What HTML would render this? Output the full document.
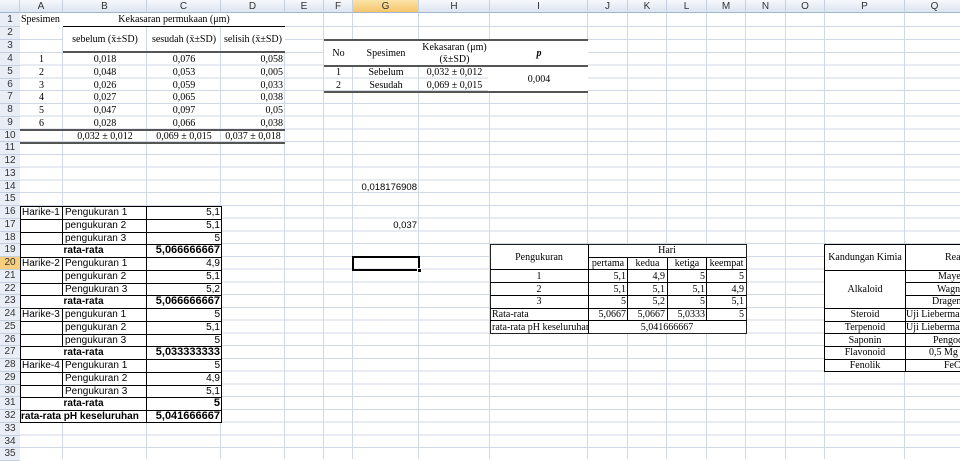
<!DOCTYPE html>
<html><head><meta charset="utf-8"><style>
*{margin:0;padding:0;box-sizing:border-box}
body{width:960px;height:459px;overflow:hidden;background:#fff;position:relative;font-family:"Liberation Serif",serif;font-size:10px;color:#000}
div{position:absolute}
.c{white-space:nowrap;overflow:hidden;height:12.75px;line-height:13px}
.s{font-family:"Liberation Sans",sans-serif;font-size:10px}
.b{font-weight:bold}
.r{text-align:right;padding-right:2px}
.m{text-align:center}
.vl{top:13px;width:1px;height:446px;background:#d0d7e5}
.rh{left:0;width:20px;text-align:center;font-family:"Liberation Sans",sans-serif;font-size:10px;color:#333;background:#e9eef6;border-bottom:1px solid #c5cfdf;line-height:12px}
.ch{top:0;height:13px;text-align:center;font-family:"Liberation Sans",sans-serif;font-size:10px;color:#333;background:linear-gradient(#f6f8fb,#dde5f0);border-right:1px solid #c5cfdf;border-bottom:1px solid #9eb6ce;line-height:13px}
.h{height:1px;background:#000}
.H{height:2px;background:#555}
.v{width:1px;background:#000}
</style></head><body>
<div style="left:20px;top:53px;width:940px;height:406px;background:repeating-linear-gradient(to bottom,transparent 0,transparent 11.75px,#d0d7e5 11.75px,#d0d7e5 12.75px)"></div>
<div style="left:20px;top:26px;width:940px;height:1px;background:#d0d7e5"></div>
<div style="left:20px;top:39px;width:940px;height:1px;background:#d0d7e5"></div>
<div style="left:20px;top:52px;width:940px;height:1px;background:#d0d7e5"></div>
<div class="vl" style="left:62px"></div><div class="vl" style="left:146px"></div><div class="vl" style="left:220px"></div><div class="vl" style="left:284px"></div><div class="vl" style="left:323px"></div><div class="vl" style="left:352px"></div><div class="vl" style="left:418px"></div><div class="vl" style="left:489px"></div><div class="vl" style="left:587px"></div><div class="vl" style="left:627px"></div><div class="vl" style="left:666px"></div><div class="vl" style="left:706px"></div><div class="vl" style="left:745px"></div><div class="vl" style="left:785px"></div><div class="vl" style="left:824px"></div><div class="vl" style="left:904px"></div>
<div class="ch" style="left:0;width:20px"></div>
<div class="ch" style="left:20px;width:43px">A</div><div class="ch" style="left:63px;width:84px">B</div><div class="ch" style="left:147px;width:74px">C</div><div class="ch" style="left:221px;width:64px">D</div><div class="ch" style="left:285px;width:39px">E</div><div class="ch" style="left:324px;width:29px">F</div><div class="ch" style="left:353px;width:66px;background:linear-gradient(#fbe3a8,#f5c56b)">G</div><div class="ch" style="left:419px;width:71px">H</div><div class="ch" style="left:490px;width:98px">I</div><div class="ch" style="left:588px;width:40px">J</div><div class="ch" style="left:628px;width:39px">K</div><div class="ch" style="left:667px;width:40px">L</div><div class="ch" style="left:707px;width:39px">M</div><div class="ch" style="left:746px;width:40px">N</div><div class="ch" style="left:786px;width:39px">O</div><div class="ch" style="left:825px;width:80px">P</div><div class="ch" style="left:905px;width:60px">Q</div>
<div class="rh" style="top:13px;height:14px;line-height:14px">1</div><div class="rh" style="top:27px;height:13px">2</div><div class="rh" style="top:40px;height:13px">3</div>
<div class="rh" style="top:53px;height:12.75px">4</div><div class="rh" style="top:65.75px;height:12.75px">5</div><div class="rh" style="top:78.5px;height:12.75px">6</div><div class="rh" style="top:91.25px;height:12.75px">7</div><div class="rh" style="top:104px;height:12.75px">8</div><div class="rh" style="top:116.75px;height:12.75px">9</div><div class="rh" style="top:129.5px;height:12.75px">10</div><div class="rh" style="top:142.25px;height:12.75px">11</div><div class="rh" style="top:155px;height:12.75px">12</div><div class="rh" style="top:167.75px;height:12.75px">13</div><div class="rh" style="top:180.5px;height:12.75px">14</div><div class="rh" style="top:193.25px;height:12.75px">15</div><div class="rh" style="top:206px;height:12.75px">16</div><div class="rh" style="top:218.75px;height:12.75px">17</div><div class="rh" style="top:231.5px;height:12.75px">18</div><div class="rh" style="top:244.25px;height:12.75px">19</div><div class="rh" style="top:257px;height:12.75px;background:#f7cf7c">20</div><div class="rh" style="top:269.75px;height:12.75px">21</div><div class="rh" style="top:282.5px;height:12.75px">22</div><div class="rh" style="top:295.25px;height:12.75px">23</div><div class="rh" style="top:308px;height:12.75px">24</div><div class="rh" style="top:320.75px;height:12.75px">25</div><div class="rh" style="top:333.5px;height:12.75px">26</div><div class="rh" style="top:346.25px;height:12.75px">27</div><div class="rh" style="top:359px;height:12.75px">28</div><div class="rh" style="top:371.75px;height:12.75px">29</div><div class="rh" style="top:384.5px;height:12.75px">30</div><div class="rh" style="top:397.25px;height:12.75px">31</div><div class="rh" style="top:410px;height:12.75px">32</div><div class="rh" style="top:422.75px;height:12.75px">33</div><div class="rh" style="top:435.5px;height:12.75px">34</div><div class="rh" style="top:448.25px;height:12.75px">35</div>

<div style="left:20px;top:13px;width:43px;height:14px;background:#fff"></div>
<div class="c" style="left:21px;top:13px;width:42px;height:14px;line-height:14px">Spesimen</div>
<div style="left:63px;top:13px;width:222px;height:14px;background:#fff"></div>
<div class="c m" style="left:63px;top:13px;width:222px;height:14px;line-height:14px">Kekasaran permukaan (μm)</div>
<div class="h" style="left:63px;top:26px;width:222px"></div>
<div style="left:63px;top:27px;width:222px;height:26px;background:#fff"></div>
<div class="c m" style="left:63px;top:33px;width:84px">sebelum (x̄±SD)</div>
<div class="c m" style="left:147px;top:33px;width:74px">sesudah (x̄±SD)</div>
<div class="c m" style="left:221px;top:33px;width:64px">selisih (x̄±SD)</div>
<div class="vl" style="left:146px;top:27px;height:26px"></div><div class="vl" style="left:220px;top:27px;height:26px"></div>
<div class="H" style="left:63px;top:51px;width:222px"></div>
<div class="c m" style="left:20px;top:53px;width:43px">1</div><div class="c m" style="left:63px;top:53px;width:84px">0,018</div><div class="c m" style="left:147px;top:53px;width:74px">0,076</div><div class="c r" style="left:221px;top:53px;width:64px">0,058</div>
<div class="c m" style="left:20px;top:65.75px;width:43px">2</div><div class="c m" style="left:63px;top:65.75px;width:84px">0,048</div><div class="c m" style="left:147px;top:65.75px;width:74px">0,053</div><div class="c r" style="left:221px;top:65.75px;width:64px">0,005</div>
<div class="c m" style="left:20px;top:78.5px;width:43px">3</div><div class="c m" style="left:63px;top:78.5px;width:84px">0,026</div><div class="c m" style="left:147px;top:78.5px;width:74px">0,059</div><div class="c r" style="left:221px;top:78.5px;width:64px">0,033</div>
<div class="c m" style="left:20px;top:91.25px;width:43px">4</div><div class="c m" style="left:63px;top:91.25px;width:84px">0,027</div><div class="c m" style="left:147px;top:91.25px;width:74px">0,065</div><div class="c r" style="left:221px;top:91.25px;width:64px">0,038</div>
<div class="c m" style="left:20px;top:104px;width:43px">5</div><div class="c m" style="left:63px;top:104px;width:84px">0,047</div><div class="c m" style="left:147px;top:104px;width:74px">0,097</div><div class="c r" style="left:221px;top:104px;width:64px">0,05</div>
<div class="c m" style="left:20px;top:116.75px;width:43px">6</div><div class="c m" style="left:63px;top:116.75px;width:84px">0,028</div><div class="c m" style="left:147px;top:116.75px;width:74px">0,066</div><div class="c r" style="left:221px;top:116.75px;width:64px">0,038</div>
<div class="H" style="left:20px;top:128.5px;width:265px"></div>
<div class="c m" style="left:63px;top:130px;width:84px">0,032 ± 0,012</div><div class="c m" style="left:147px;top:130px;width:74px">0,069 ± 0,015</div><div class="c m" style="left:221px;top:130px;width:64px">0,037 ± 0,018</div>
<div class="H" style="left:20px;top:141.5px;width:265px"></div>

<div class="H" style="left:324px;top:39px;width:264px"></div>
<div style="left:324px;top:41px;width:264px;height:24px;background:#fff"></div>
<div class="c m" style="left:324px;top:47px;width:29px">No</div>
<div class="c m" style="left:353px;top:47px;width:66px">Spesimen</div>
<div class="c m" style="left:419px;top:41px;width:71px">Kekasaran (μm)</div>
<div class="c m" style="left:419px;top:53px;width:71px">(x̄±SD)</div>
<div class="c m b" style="left:490px;top:47px;width:98px;font-style:italic">p</div>
<div class="H" style="left:324px;top:64.75px;width:264px"></div>
<div style="left:488px;top:66.75px;width:100px;height:24px;background:#fff"></div>
<div class="c m" style="left:324px;top:66px;width:29px">1</div><div class="c m" style="left:353px;top:66px;width:66px">Sebelum</div><div class="c m" style="left:419px;top:66px;width:71px">0,032 ± 0,012</div>
<div class="c m" style="left:324px;top:78.5px;width:29px">2</div><div class="c m" style="left:353px;top:78.5px;width:66px">Sesudah</div><div class="c m" style="left:419px;top:78.5px;width:71px">0,069 ± 0,015</div>
<div class="c m" style="left:490px;top:72.5px;width:98px">0,004</div>
<div class="H" style="left:324px;top:90.5px;width:264px"></div>

<div class="c r s" style="left:353px;top:180.5px;width:66px;font-size:9.5px">0,018176908</div>
<div class="c r s" style="left:353px;top:218.75px;width:66px;font-size:9.5px">0,037</div>
<div style="left:352px;top:255.5px;width:68px;height:15px;border:2px solid #000"></div>
<div style="left:417px;top:268px;width:5px;height:5px;background:#000;border:1px solid #fff"></div>

<div style="left:20px;top:206px;width:202px;height:216.75px;border:1px solid #000;background:#fff"></div>
<div class="h" style="left:20px;top:218.75px;width:202px"></div><div class="h" style="left:20px;top:231.5px;width:202px"></div><div class="h" style="left:20px;top:244.25px;width:202px"></div><div class="h" style="left:20px;top:257px;width:202px"></div><div class="h" style="left:20px;top:269.75px;width:202px"></div><div class="h" style="left:20px;top:282.5px;width:202px"></div><div class="h" style="left:20px;top:295.25px;width:202px"></div><div class="h" style="left:20px;top:308px;width:202px"></div><div class="h" style="left:20px;top:320.75px;width:202px"></div><div class="h" style="left:20px;top:333.5px;width:202px"></div><div class="h" style="left:20px;top:346.25px;width:202px"></div><div class="h" style="left:20px;top:359px;width:202px"></div><div class="h" style="left:20px;top:371.75px;width:202px"></div><div class="h" style="left:20px;top:384.5px;width:202px"></div><div class="h" style="left:20px;top:397.25px;width:202px"></div><div class="h" style="left:20px;top:410px;width:202px"></div>
<div class="v" style="left:146px;top:206px;height:216.75px"></div>
<div class="v" style="left:62px;top:206px;height:38.25px"></div><div class="v" style="left:62px;top:257px;height:38.25px"></div><div class="v" style="left:62px;top:308px;height:38.25px"></div><div class="v" style="left:62px;top:359px;height:38.25px"></div>
<div class="c s" style="left:22px;top:206px">Harike-1</div><div class="c s" style="left:65px;top:206px">Pengukuran 1</div><div class="c s r" style="left:147px;top:206px;width:75px">5,1</div>
<div class="c s" style="left:65px;top:218.75px">pengukuran 2</div><div class="c s r" style="left:147px;top:218.75px;width:75px">5,1</div>
<div class="c s" style="left:65px;top:231.5px">pengukuran 3</div><div class="c s r" style="left:147px;top:231.5px;width:75px">5</div>
<div class="c s b m" style="left:20px;top:244.25px;width:127px">rata-rata</div><div class="c s b r" style="left:147px;top:244.25px;width:75px;font-size:11px">5,066666667</div>
<div class="c s" style="left:22px;top:257px">Harike-2</div><div class="c s" style="left:65px;top:257px">Pengukuran 1</div><div class="c s r" style="left:147px;top:257px;width:75px">4,9</div>
<div class="c s" style="left:65px;top:269.75px">pengukuran 2</div><div class="c s r" style="left:147px;top:269.75px;width:75px">5,1</div>
<div class="c s" style="left:65px;top:282.5px">Pengukuran 3</div><div class="c s r" style="left:147px;top:282.5px;width:75px">5,2</div>
<div class="c s b m" style="left:20px;top:295.25px;width:127px">rata-rata</div><div class="c s b r" style="left:147px;top:295.25px;width:75px;font-size:11px">5,066666667</div>
<div class="c s" style="left:22px;top:308px">Harike-3</div><div class="c s" style="left:65px;top:308px">pengukuran 1</div><div class="c s r" style="left:147px;top:308px;width:75px">5</div>
<div class="c s" style="left:65px;top:320.75px">pengukuran 2</div><div class="c s r" style="left:147px;top:320.75px;width:75px">5,1</div>
<div class="c s" style="left:65px;top:333.5px">pengukuran 3</div><div class="c s r" style="left:147px;top:333.5px;width:75px">5</div>
<div class="c s b m" style="left:20px;top:346.25px;width:127px">rata-rata</div><div class="c s b r" style="left:147px;top:346.25px;width:75px;font-size:11px">5,033333333</div>
<div class="c s" style="left:22px;top:359px">Harike-4</div><div class="c s" style="left:65px;top:359px">Pengukuran 1</div><div class="c s r" style="left:147px;top:359px;width:75px">5</div>
<div class="c s" style="left:65px;top:371.75px">Pengukuran 2</div><div class="c s r" style="left:147px;top:371.75px;width:75px">4,9</div>
<div class="c s" style="left:65px;top:384.5px">Pengukuran 3</div><div class="c s r" style="left:147px;top:384.5px;width:75px">5,1</div>
<div class="c s b m" style="left:20px;top:397.25px;width:127px">rata-rata</div><div class="c s b r" style="left:147px;top:397.25px;width:75px;font-size:11px">5</div>
<div class="c s b" style="left:21px;top:410px;width:126px">rata-rata pH keseluruhan</div><div class="c s b r" style="left:147px;top:410px;width:75px;font-size:11px">5,041666667</div>

<div style="left:490px;top:243.5px;width:257px;height:90.5px;border:1.5px solid #222;background:#fff"></div>
<div class="h" style="left:588px;top:256.5px;width:158px"></div>
<div class="h" style="left:490px;top:269.25px;width:257px"></div><div class="h" style="left:490px;top:282px;width:257px"></div><div class="h" style="left:490px;top:294.75px;width:257px"></div><div class="h" style="left:490px;top:307.5px;width:257px"></div><div class="h" style="left:490px;top:320.25px;width:257px"></div>
<div class="v" style="left:587.5px;top:244px;height:90px"></div>
<div class="v" style="left:627px;top:257px;height:63.5px"></div><div class="v" style="left:666.5px;top:257px;height:63.5px"></div><div class="v" style="left:706px;top:257px;height:63.5px"></div>
<div class="c m" style="left:490px;top:250.5px;width:98px">Pengukuran</div>
<div class="c m" style="left:588px;top:244.25px;width:158px">Hari</div>
<div class="c m" style="left:588px;top:257px;width:40px">pertama</div><div class="c m" style="left:628px;top:257px;width:39px">kedua</div><div class="c m" style="left:667px;top:257px;width:40px">ketiga</div><div class="c m" style="left:707px;top:257px;width:39px">keempat</div>
<div class="c m" style="left:490px;top:269.75px;width:98px">1</div><div class="c r" style="left:588px;top:269.75px;width:40px">5,1</div><div class="c r" style="left:628px;top:269.75px;width:39px">4,9</div><div class="c r" style="left:667px;top:269.75px;width:40px">5</div><div class="c r" style="left:707px;top:269.75px;width:39px">5</div>
<div class="c m" style="left:490px;top:282.5px;width:98px">2</div><div class="c r" style="left:588px;top:282.5px;width:40px">5,1</div><div class="c r" style="left:628px;top:282.5px;width:39px">5,1</div><div class="c r" style="left:667px;top:282.5px;width:40px">5,1</div><div class="c r" style="left:707px;top:282.5px;width:39px">4,9</div>
<div class="c m" style="left:490px;top:295.25px;width:98px">3</div><div class="c r" style="left:588px;top:295.25px;width:40px">5</div><div class="c r" style="left:628px;top:295.25px;width:39px">5,2</div><div class="c r" style="left:667px;top:295.25px;width:40px">5</div><div class="c r" style="left:707px;top:295.25px;width:39px">5,1</div>
<div class="c" style="left:492px;top:308px;width:96px">Rata-rata</div><div class="c r" style="left:588px;top:308px;width:40px">5,0667</div><div class="c r" style="left:628px;top:308px;width:39px">5,0667</div><div class="c r" style="left:667px;top:308px;width:40px">5,0333</div><div class="c r" style="left:707px;top:308px;width:39px">5</div>
<div class="c" style="left:492px;top:320.75px;width:96px">rata-rata pH keseluruhan</div><div class="c m" style="left:588px;top:320.75px;width:158px">5,041666667</div>

<div style="left:824px;top:243.5px;width:140px;height:128.5px;border:1px solid #000;background:#fff"></div>
<div class="v" style="left:904.5px;top:244px;height:128px"></div>
<div class="h" style="left:824px;top:269.5px;width:140px"></div>
<div class="h" style="left:905px;top:282.25px;width:60px"></div><div class="h" style="left:905px;top:295px;width:60px"></div>
<div class="h" style="left:824px;top:307.75px;width:140px"></div><div class="h" style="left:824px;top:320.5px;width:140px"></div><div class="h" style="left:824px;top:333.25px;width:140px"></div><div class="h" style="left:824px;top:346px;width:140px"></div><div class="h" style="left:824px;top:358.75px;width:140px"></div>
<div class="c m" style="left:825px;top:250.5px;width:80px">Kandungan Kimia</div><div class="c" style="left:945px;top:250.5px">Reagen</div>
<div class="c m" style="left:825px;top:282.5px;width:80px">Alkaloid</div>
<div class="c" style="left:938px;top:269.75px">Mayer</div><div class="c" style="left:937px;top:282.5px">Wagner</div><div class="c" style="left:932px;top:295.25px">Dragendorff</div>
<div class="c m" style="left:825px;top:308px;width:80px">Steroid</div><div class="c" style="left:906px;top:308px">Uji Liebermann</div>
<div class="c m" style="left:825px;top:320.75px;width:80px">Terpenoid</div><div class="c" style="left:906px;top:320.75px">Uji Liebermann</div>
<div class="c m" style="left:825px;top:333.5px;width:80px">Saponin</div><div class="c" style="left:933px;top:333.5px">Pengocokan</div>
<div class="c m" style="left:825px;top:346.25px;width:80px">Flavonoid</div><div class="c" style="left:929px;top:346.25px">0,5 Mg dan</div>
<div class="c m" style="left:825px;top:359px;width:80px">Fenolik</div><div class="c" style="left:944px;top:359px">FeCl3</div>
</body></html>
